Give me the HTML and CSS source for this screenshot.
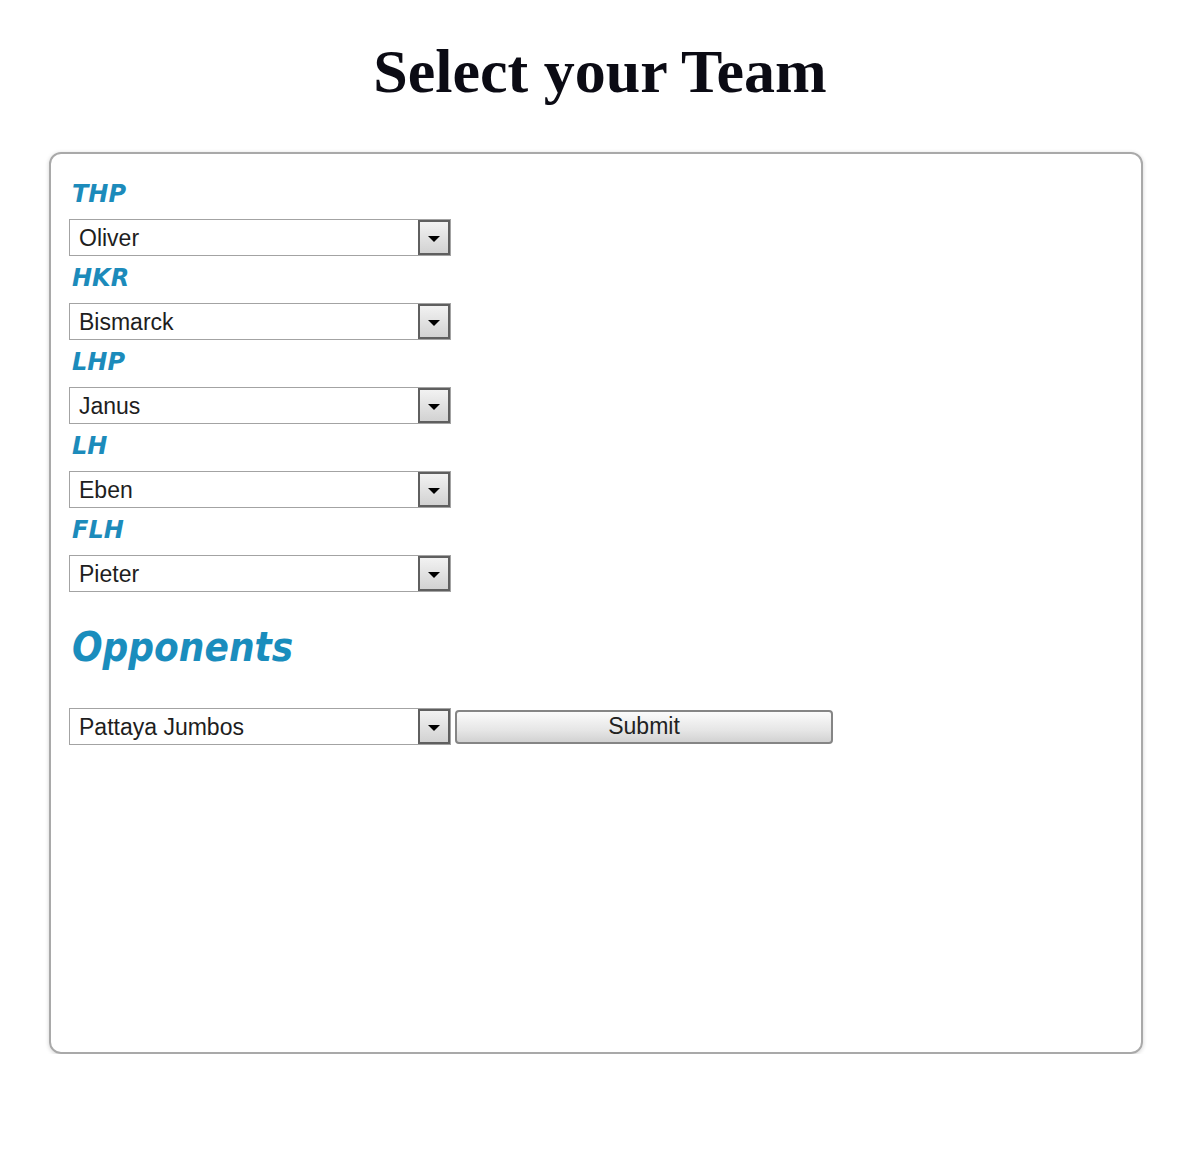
FILE: index.html
```html
<!DOCTYPE html>
<html lang="en">

<head>
    <meta charset="UTF-8">
    <meta name="viewport" content="width=device-width, initial-scale=1.0">
    <title>Select your Team</title>
    <link rel="stylesheet" href="styles.css">
</head>

<body>

    <h1>Select your Team</h1>

    <div class="card">
        <form>
            <div class="field">
                <label for="thp">THP</label>
                <div class="pick">
                    <select id="thp">
                        <option>Oliver</option>
                        <option>Bismarck</option>
                        <option>Janus</option>
                    </select>
                    <span class="arrow"></span>
                </div>
            </div>

            <div class="field">
                <label for="hkr">HKR</label>
                <div class="pick">
                    <select id="hkr">
                        <option>Bismarck</option>
                        <option>Oliver</option>
                    </select>
                    <span class="arrow"></span>
                </div>
            </div>

            <div class="field">
                <label for="lhp">LHP</label>
                <div class="pick">
                    <select id="lhp">
                        <option>Janus</option>
                        <option>Oliver</option>
                    </select>
                    <span class="arrow"></span>
                </div>
            </div>

            <div class="field">
                <label for="lh">LH</label>
                <div class="pick">
                    <select id="lh">
                        <option>Eben</option>
                        <option>Pieter</option>
                    </select>
                    <span class="arrow"></span>
                </div>
            </div>

            <div class="field">
                <label for="flh">FLH</label>
                <div class="pick">
                    <select id="flh">
                        <option>Pieter</option>
                        <option>Eben</option>
                    </select>
                    <span class="arrow"></span>
                </div>
            </div>

            <h2>Opponents</h2>

            <div class="row">
                <div class="pick">
                    <select id="opponents">
                        <option>Pattaya Jumbos</option>
                    </select>
                    <span class="arrow"></span>
                </div>
                <button type="submit" class="submit">Submit</button>
            </div>
        </form>
    </div>

</body>

</html>
```

FILE: styles.css
```css
body {
    margin: 0;
    background-color: #fff;
}

h1 {
    font-family: 'Liberation Serif', 'Times New Roman', serif;
    font-size: 62px;
    line-height: 69px;
    text-align: center;
    color: #0b0b14;
    margin: 37px 0 46px 0;
}

.card {
    box-sizing: border-box;
    width: 1094px;
    height: 902px;
    margin-left: 49px;
    padding: 27px 18px 0 18px;
    border: 2px solid #a9a9a9;
    border-radius: 12px;
    box-shadow: 0 1px 4px rgba(0, 0, 0, 0.18);
}

.field {
    margin-bottom: 9px;
}

.field label {
    display: block;
    margin-left: 3px;
    font-family: 'DejaVu Sans', Verdana, sans-serif;
    font-weight: bold;
    font-style: italic;
    font-size: 24px;
    line-height: 26px;
    color: #1c8bbb;
}

.pick {
    position: relative;
    width: 382px;
    height: 37px;
    margin-top: 12px;
}

.pick select {
    appearance: none;
    -webkit-appearance: none;
    box-sizing: border-box;
    width: 100%;
    height: 100%;
    margin: 0;
    padding: 0 0 0 9px;
    border: 1px solid #a3a3a3;
    border-radius: 0;
    background-color: #fff;
    font-family: 'Liberation Sans', Arial, sans-serif;
    font-size: 23px;
    color: #1e1e1e;
}

.arrow {
    position: absolute;
    top: 1px;
    right: 1px;
    bottom: 1px;
    width: 32px;
    box-sizing: border-box;
    border: 2px solid #5f5f5f;
    background: linear-gradient(#f2f2f2, #d2d2d2);
    pointer-events: none;
}

.arrow::after {
    content: '';
    position: absolute;
    left: 8px;
    top: 14px;
    border-left: 6px solid transparent;
    border-right: 6px solid transparent;
    border-top: 6px solid #000;
}

h2 {
    margin: 32px 0 38px 3px;
    font-family: 'DejaVu Sans Condensed', 'DejaVu Sans', Tahoma, sans-serif;
    font-weight: bold;
    font-style: italic;
    font-size: 40px;
    line-height: 46px;
    color: #1a8dbd;
}

.row {
    display: flex;
    align-items: center;
    gap: 4px;
}

.row .pick {
    margin-top: 0;
}

.submit {
    width: 378px;
    height: 34px;
    margin: 0;
    padding: 0;
    border: 2px solid #858585;
    border-radius: 4px;
    background: linear-gradient(#fbfbfb, #e6e6e6 60%, #d2d2d2);
    font-family: 'Liberation Sans', Arial, sans-serif;
    font-size: 23px;
    color: #222;
    cursor: pointer;
}
```
